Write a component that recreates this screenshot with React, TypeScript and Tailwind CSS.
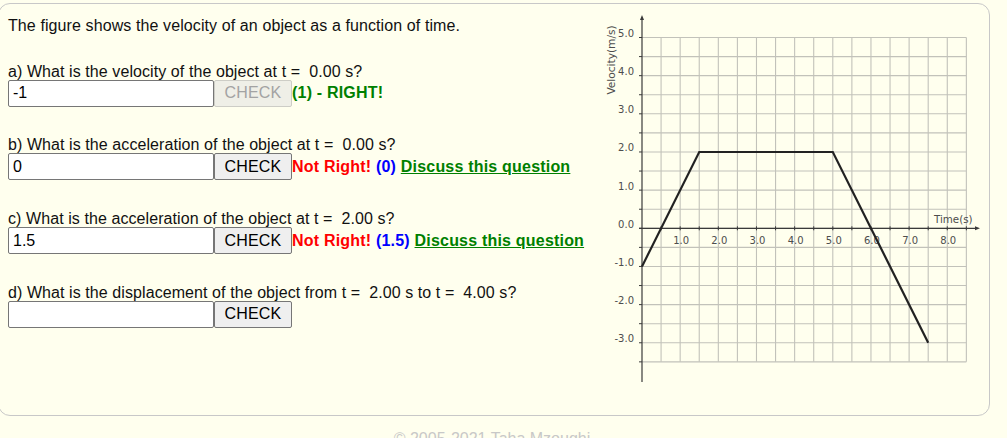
import React from 'react';

const T = (t: number) => 47 + 38.16 * t;
const V = (v: number) => 218.3 - 38.16 * v;

function Graph() {
  const cols = Array.from({ length: 17 }, (_, i) => (i + 1) * 0.5);
  const rows = Array.from({ length: 18 }, (_, i) => 5 - i * 0.5);
  const yLabels = [5, 4, 3, 2, 1, 0, -1, -2, -3];
  const xLabels = [1, 2, 3, 4, 5, 6, 7, 8];
  const curve = [
    [0, -1],
    [1.5, 2],
    [5, 2],
    [7.5, -3],
  ]
    .map(([t, v]) => `${T(t)},${V(v)}`)
    .join(' ');

  return (
    <svg width="390" height="380" viewBox="0 0 390 380" className="mt-[6px] shrink-0">
      {/* grid */}
      {cols.map((t) => (
        <line key={'c' + t} x1={T(t)} y1={V(5)} x2={T(t)} y2={V(-3.5)} stroke="#c2c2ba" strokeWidth="1.1" />
      ))}
      {rows.map((v) => (
        <line key={'r' + v} x1={T(0)} y1={V(v)} x2={T(8.5)} y2={V(v)} stroke="#c2c2ba" strokeWidth="1.1" />
      ))}

      {/* axes */}
      <line x1={T(0)} y1="9" x2={T(0)} y2="372" stroke="#3a3a3a" strokeWidth="1.2" />
      <polygon points={`${T(0)},5 ${T(0) - 2},10 ${T(0) + 2},10`} fill="#3a3a3a" />
      <line x1="44" y1={V(0)} x2="381" y2={V(0)} stroke="#3a3a3a" strokeWidth="1.2" />
      <polygon points={`385,${V(0)} 380,${V(0) - 2} 380,${V(0) + 2}`} fill="#3a3a3a" />
      {rows.map((v) => (
        <line key={'yt' + v} x1="44" y1={V(v)} x2={T(0)} y2={V(v)} stroke="#3a3a3a" strokeWidth="1" />
      ))}
      {cols.map((t) => (
        <line key={'xt' + t} x1={T(t)} y1={V(0) - 2} x2={T(t)} y2={V(0) + 2} stroke="#3a3a3a" strokeWidth="1" />
      ))}

      {/* labels */}
      <g fontFamily="'DejaVu Sans', sans-serif" fontSize="10" fill="#4d4d4d">
        {yLabels.map((v) => (
          <text key={'yl' + v} x="39" y={V(v) - 0.5} textAnchor="end">
            {v.toFixed(1)}
          </text>
        ))}
        {xLabels.map((t) => (
          <text key={'xl' + t} x={T(t) + 1} y={V(0) + 16} textAnchor="middle">
            {t.toFixed(1)}
          </text>
        ))}
        <text x="339" y="213" fontSize="10.3">Time(s)</text>
        <text x="19.5" y="50" fontSize="10.6" textAnchor="middle" transform="rotate(-90 19.5 50)">
          Velocity(m/s)
        </text>
      </g>

      {/* velocity curve */}
      <polyline points={curve} fill="none" stroke="#222" strokeWidth="2.2" strokeLinejoin="miter" />
    </svg>
  );
}

function Question({
  text,
  value,
  disabled,
  children,
  first,
}: {
  text: string;
  value: string;
  disabled?: boolean;
  children?: React.ReactNode;
  first?: boolean;
}) {
  return (
    <div className={first ? 'mt-[30px]' : 'mt-[30.8px]'}>
      <div className="h-[16px] leading-[16px] whitespace-nowrap tracking-[0.08px]">{text}</div>
      <div className="flex items-center h-[27px] whitespace-nowrap">
        <input
          readOnly
          value={value}
          className="w-[206px] h-[27px] bg-white border border-[#767676] rounded-[2px] px-[4px] text-black outline-none"
        />
        {disabled ? (
          <button className="w-[78px] h-[27px] bg-[#efefe7] border border-[#cdcdc6] rounded-[2px] text-[#a3a3a3] tracking-[0.2px]">
            CHECK
          </button>
        ) : (
          <button className="w-[78px] h-[27px] bg-[#efefef] border border-[#767676] rounded-[2px] text-black tracking-[0.2px]">
            CHECK
          </button>
        )}
        {children && <span className="font-bold tracking-[0.2px]">{children}</span>}
      </div>
    </div>
  );
}

export default function App() {
  return (
    <div className="min-h-screen bg-[#ffffee] font-['Liberation_Sans',Arial,sans-serif] text-[16px] text-[#111] overflow-hidden pt-[3px]">
      <div className="ml-[-2px] w-[992px] h-[413px] border border-[#c8c8c8] rounded-[12px] flex">
        <div className="w-[596px] shrink-0 pl-[9px] pt-[13.5px]">
          <div className="h-[16px] leading-[16px] whitespace-nowrap tracking-[0.1px]">
            The figure shows the velocity of an object as a function of time.
          </div>

          <Question first text={'a) What is the velocity of the object at t =\u00a0 0.00 s?'} value="-1" disabled>
            <span className="text-[#008000]">(1) - RIGHT!</span>
          </Question>

          <Question text={'b) What is the acceleration of the object at t =\u00a0 0.00 s?'} value="0">
            <span className="text-[#ff0000]">Not Right!</span> <span className="text-[#0000ff]">(0)</span>{' '}
            <a href="#" className="text-[#008000] underline">
              Discuss this question
            </a>
          </Question>

          <Question text={'c) What is the acceleration of the object at t =\u00a0 2.00 s?'} value="1.5">
            <span className="text-[#ff0000]">Not Right!</span> <span className="text-[#0000ff]">(1.5)</span>{' '}
            <a href="#" className="text-[#008000] underline">
              Discuss this question
            </a>
          </Question>

          <Question
            text={'d) What is the displacement of the object from t =\u00a0 2.00 s to t =\u00a0 4.00 s?'}
            value=""
          />
        </div>

        <Graph />
      </div>

      <div className="w-[984px] mt-[11px] text-center text-[#c8c8c8]">© 2005-2021 Taha Mzoughi</div>
    </div>
  );
}
